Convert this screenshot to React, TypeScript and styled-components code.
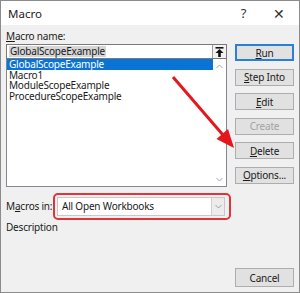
import styled, { createGlobalStyle, css } from "styled-components";

const GlobalStyle = createGlobalStyle`
   html, body {
      margin: 0;
      padding: 0;
      background: #ffffff;
   }
   * {
      box-sizing: border-box;
   }
`;

const macros = [
   "GlobalScopeExample",
   "Macro1",
   "ModuleScopeExample",
   "ProcedureScopeExample",
];

const buttons = [
   { key: "R", rest: "un", isDefault: true },
   { key: "S", rest: "tep Into" },
   { key: "E", rest: "dit" },
   { key: "", rest: "Create", disabled: true },
   { key: "D", rest: "elete" },
   { key: "O", rest: "ptions..." },
];

function UpArrowIcon() {
   return (
      <svg width="9" height="10" viewBox="0 0 9 10">
         <rect x="0.5" y="0" width="8" height="1.6" fill="#111" />
         <path d="M4.5 2 L8.5 6 L5.8 6 L5.8 10 L3.2 10 L3.2 6 L0.5 6 Z" fill="#111" />
      </svg>
   );
}

function Chevron({ up }: { up?: boolean }) {
   return (
      <svg width="7" height="5" viewBox="0 0 7 5">
         <path
            d={up ? "M0.5 4 L3.5 1 L6.5 4" : "M0.5 1 L3.5 4 L6.5 1"}
            fill="none"
            stroke="#a0a0a0"
            strokeWidth="1"
         />
      </svg>
   );
}

function App() {
   return (
      <>
         <GlobalStyle />
         <Window>
            <TitleBar>
               <Title>Macro</Title>
               <TitleButtons>
                  <span>?</span>
                  <CloseGlyph>✕</CloseGlyph>
               </TitleButtons>
            </TitleBar>
            <Body>
               <TopSection>
                  <LeftColumn>
                     <Label>
                        <u>M</u>acro name:
                     </Label>
                     <NameBox>
                        <SelectedText>GlobalScopeExample</SelectedText>
                        <UpButton>
                           <UpArrowIcon />
                        </UpButton>
                     </NameBox>
                     <ListBox>
                        <Items>
                           {macros.map((m, i) => (
                              <Item key={m} $selected={i === 0}>
                                 {m}
                              </Item>
                           ))}
                        </Items>
                        <ScrollTrack>
                           <Chevron up />
                           <Chevron />
                        </ScrollTrack>
                     </ListBox>
                  </LeftColumn>
                  <ButtonColumn>
                     {buttons.map((b) => (
                        <DialogButton
                           key={b.rest}
                           $default={b.isDefault}
                           $disabled={b.disabled}
                        >
                           {b.key && <u>{b.key}</u>}
                           {b.rest}
                        </DialogButton>
                     ))}
                  </ButtonColumn>
               </TopSection>
               <MacrosRow>
                  <Label $width={47}>
                     M<u>a</u>cros in:
                  </Label>
                  <Highlight>
                     <Combo>
                        <span>All Open Workbooks</span>
                        <ComboButton>
                           <Chevron />
                        </ComboButton>
                     </Combo>
                  </Highlight>
               </MacrosRow>
               <Label>Description</Label>
               <Footer>
                  <DialogButton $tall>Cancel</DialogButton>
               </Footer>
            </Body>
            <ArrowOverlay width="300" height="293" viewBox="0 0 300 293">
               <line
                  x1="173"
                  y1="77"
                  x2="223"
                  y2="135"
                  stroke="#e4181c"
                  strokeWidth="3"
               />
               <polygon points="234,148 216.5,139 228,129" fill="#e4181c" />
            </ArrowOverlay>
         </Window>
      </>
   );
}

export default App;

const Window = styled.div`
   position: relative;
   width: 300px;
   height: 293px;
   display: flex;
   flex-direction: column;
   background: #f0f0f0;
   border: 1px solid #8c8c8c;
   font-family: "Noto Sans", "Liberation Sans", sans-serif;
   font-size: 10px;
   letter-spacing: -0.2px;
   color: #1a1a1a;
   overflow: hidden;
`;

const TitleBar = styled.div`
   height: 24px;
   flex: none;
   display: flex;
   align-items: center;
   justify-content: space-between;
   padding: 0 14px 0 7px;
   background: #ffffff;
`;

const Title = styled.span`
   font-size: 11.5px;
   letter-spacing: 0;
   color: #222;
`;

const TitleButtons = styled.div`
   display: flex;
   align-items: center;
   gap: 27px;
   font-size: 13px;
   color: #333;
`;

const CloseGlyph = styled.span`
   font-size: 14px;
   font-weight: 300;
`;

const Body = styled.div`
   flex: 1;
   display: flex;
   flex-direction: column;
   padding: 4px 5px 5px 5px;
`;

const TopSection = styled.div`
   display: flex;
   justify-content: space-between;
`;

const LeftColumn = styled.div`
   width: 221px;
   display: flex;
   flex-direction: column;
`;

const Label = styled.div<{ $width?: number }>`
   height: 15px;
   line-height: 15px;
   flex: none;
   width: ${(p) => (p.$width ? `${p.$width}px` : "auto")};
   white-space: nowrap;
   u {
      text-decoration-thickness: 1px;
   }
`;

const NameBox = styled.div`
   height: 15px;
   display: flex;
   align-items: center;
   justify-content: space-between;
   padding-left: 2px;
   background: #ffffff;
   border: 1px solid #7a7a7a;
`;

const SelectedText = styled.span`
   background: #d6d6d6;
   line-height: 11px;
   padding: 0 1px;
`;

const UpButton = styled.div`
   width: 14px;
   height: 13px;
   display: flex;
   align-items: center;
   justify-content: center;
   background: #f2f2f2;
   border-left: 1px solid #a0a0a0;
`;

const ListBox = styled.div`
   height: 128px;
   display: flex;
   background: #ffffff;
   border: 1px solid #828790;
   border-top: none;
`;

const Items = styled.div`
   flex: 1;
   display: flex;
   flex-direction: column;
`;

const Item = styled.div<{ $selected?: boolean }>`
   height: 10.6px;
   line-height: 10.6px;
   padding-left: 2px;
   overflow: visible;
   ${(p) =>
      p.$selected &&
      css`
         background: #0a74d6;
         color: #ffffff;
      `}
`;

const ScrollTrack = styled.div`
   width: 13px;
   display: flex;
   flex-direction: column;
   align-items: center;
   justify-content: space-between;
   padding: 5px 0 4px;
   background: #ffffff;
`;

const ButtonColumn = styled.div`
   width: 59px;
   display: flex;
   flex-direction: column;
   gap: 7.5px;
   padding-top: 15px;
`;

const DialogButton = styled.div<{
   $default?: boolean;
   $disabled?: boolean;
   $tall?: boolean;
}>`
   width: 59px;
   height: ${(p) => (p.$tall ? "19px" : "17px")};
   display: flex;
   align-items: center;
   justify-content: center;
   background: #e1e1e1;
   border: 1px solid #adadad;
   color: ${(p) => (p.$disabled ? "#a3a3a3" : "#1a1a1a")};
   ${(p) =>
      p.$default &&
      css`
         border: 2px solid #2b7fd4;
      `}
`;

const MacrosRow = styled.div`
   display: flex;
   align-items: center;
   margin-top: 5px;
   height: 28px;
`;

const Highlight = styled.div`
   width: 178px;
   height: 27px;
   padding: 2px;
   border: 2px solid #e0343c;
   border-radius: 5px;
`;

const Combo = styled.div`
   height: 19px;
   display: flex;
   align-items: center;
   justify-content: space-between;
   padding-left: 4px;
   margin-right: 2px;
   background: #ffffff;
   border: 1px solid #c8c8c8;
`;

const ComboButton = styled.div`
   width: 13px;
   height: 17px;
   display: flex;
   align-items: center;
   justify-content: center;
   background: #ececec;
   border-left: 1px solid #d0d0d0;
`;

const Footer = styled.div`
   flex: 1;
   display: flex;
   justify-content: flex-end;
   align-items: flex-end;
   padding-bottom: 0px;
`;

const ArrowOverlay = styled.svg`
   position: absolute;
   left: -1px;
   top: -1px;
   pointer-events: none;
`;
